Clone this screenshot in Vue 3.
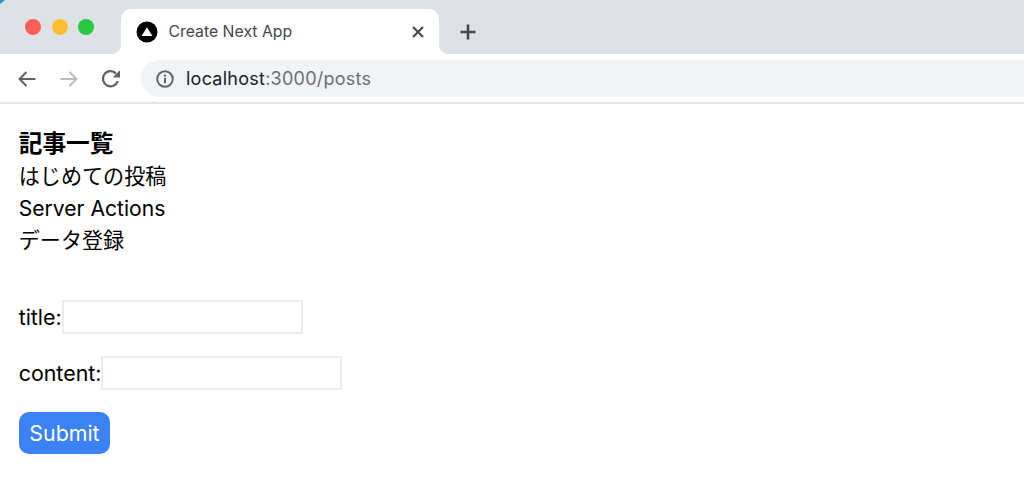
<script setup>
const posts = ['はじめての投稿', 'Server Actions', 'データ登録']
const fields = ['title', 'content']
</script>

<template>
  <div class="page">
    <span class="corner"></span>
    <header class="tabstrip">
      <div class="lights">
        <span class="light red"></span>
        <span class="light yellow"></span>
        <span class="light green"></span>
      </div>
      <div class="tab">
        <svg class="favicon" width="22" height="22" viewBox="0 0 22 22">
          <circle cx="11" cy="11" r="10.5" fill="#000" />
          <path d="M11 6.2 L16.4 15 H5.6 Z" fill="#fff" />
        </svg>
        <span class="tab-title">Create Next App</span>
        <svg class="tab-close" width="14" height="14" viewBox="0 0 14 14">
          <path d="M2 2 L12 12 M12 2 L2 12" stroke="#45484d" stroke-width="2.1" fill="none" />
        </svg>
      </div>
      <svg class="new-tab" width="18" height="18" viewBox="0 0 18 18">
        <path d="M9 1.5 V16.5 M1.5 9 H16.5" stroke="#45484d" stroke-width="2.6" fill="none" />
      </svg>
    </header>

    <nav class="toolbar">
      <svg class="nav-icon" width="20" height="20" viewBox="0 0 20 20">
        <path d="M18.5 10 H2.5 M9.5 3 L2.5 10 L9.5 17" stroke="#5f6368" stroke-width="2" fill="none" />
      </svg>
      <svg class="nav-icon" width="20" height="20" viewBox="0 0 20 20">
        <path d="M1.5 10 H17.5 M10.5 3 L17.5 10 L10.5 17" stroke="#b9bbbe" stroke-width="2" fill="none" />
      </svg>
      <svg class="nav-icon" width="20" height="20" viewBox="0 0 20 20">
        <path d="M16.8 12 A7.6 7.6 0 1 1 15 4.4" stroke="#5f6368" stroke-width="2.2" fill="none" />
        <path d="M19 1.2 V8.6 H11.6 Z" fill="#5f6368" />
      </svg>
      <div class="address">
        <svg width="18" height="18" viewBox="0 0 18 18">
          <circle cx="9" cy="9" r="7.8" stroke="#5f6368" stroke-width="1.9" fill="none" />
          <path d="M9 8 V13.2" stroke="#5f6368" stroke-width="2" />
          <circle cx="9" cy="5.6" r="1.2" fill="#5f6368" />
        </svg>
        <span class="url"><span class="host">localhost</span>:3000/posts</span>
      </div>
    </nav>

    <main class="content">
      <h1 class="heading">記事一覧</h1>
      <ul class="posts">
        <li v-for="post in posts" :key="post">{{ post }}</li>
      </ul>
      <form class="post-form" @submit.prevent>
        <label v-for="field in fields" :key="field" class="field">
          {{ field }}:<input class="input" type="text" />
        </label>
        <button class="submit" type="submit">Submit</button>
      </form>
    </main>
  </div>
</template>

<style>
html, body { margin: 0; background: #fff; }
</style>

<style scoped>
.page {
  position: relative;
  width: 1024px;
  height: 478px;
  overflow: hidden;
  background: #fff;
  color: #000;
  font-family: Inter, "Noto Sans CJK JP", sans-serif;
}
.corner {
  position: absolute;
  left: 0;
  top: 0;
  width: 5px;
  height: 4px;
  background: #1c9fc4;
  clip-path: polygon(0 0, 100% 0, 0 100%);
}
.tabstrip {
  height: 54px;
  display: flex;
  align-items: flex-end;
  background: #dee1e6;
  box-sizing: border-box;
}
.lights {
  width: 121px;
  height: 54px;
  box-sizing: border-box;
  padding: 19px 0 0 25px;
  display: flex;
  gap: 10.5px;
  align-items: flex-start;
}
.light { width: 16px; height: 16px; border-radius: 50%; }
.red { background: #ff5f57; }
.yellow { background: #febc2e; }
.green { background: #28c840; }
.tab {
  position: relative;
  width: 318px;
  height: 45px;
  box-sizing: border-box;
  padding: 0 14px 0 15px;
  display: flex;
  align-items: center;
  background: #fff;
  border-radius: 10px 10px 0 0;
}
.tab::before, .tab::after {
  content: "";
  position: absolute;
  bottom: 0;
  width: 10px;
  height: 10px;
}
.tab::before {
  left: -10px;
  background: radial-gradient(circle at 0 0, transparent 10px, #fff 10.5px);
}
.tab::after {
  right: -10px;
  background: radial-gradient(circle at 100% 0, transparent 10px, #fff 10.5px);
}
.favicon { flex: none; }
.tab-title {
  flex: 1;
  margin-left: 10.5px;
  font-size: 15.8px;
  color: #45484d;
}
.tab-close { flex: none; }
.new-tab { margin: 0 0 13px 20px; }
.toolbar {
  height: 50px;
  box-sizing: border-box;
  padding: 6px 0 5px 17px;
  display: flex;
  align-items: center;
  gap: 22px;
  background: #fff;
  border-bottom: 2px solid #e3e4e6;
}
.nav-icon { flex: none; }
.address {
  flex: 1;
  height: 37px;
  margin-left: -2px;
  margin-right: -160px;
  padding-left: 15px;
  display: flex;
  align-items: center;
  gap: 12px;
  background: #f1f3f4;
  border-radius: 18.5px;
}
.url { font-size: 18px; color: #6b6f74; letter-spacing: 0.25px; }
.host { color: #202124; }
.content {
  padding: 24px 19px 0 18.7px;
  font-size: 21.1px;
}
.heading {
  margin: 0;
  font-size: 23.7px;
  line-height: 32px;
  font-weight: 700;
}
.posts {
  margin: 1.4px 0 0;
  padding: 0;
  list-style: none;
  line-height: 32px;
}
.post-form {
  margin-top: 42.6px;
  display: flex;
  flex-direction: column;
  align-items: flex-start;
  gap: 22px;
}
.field {
  display: flex;
  align-items: center;
  font-size: 21.4px;
  line-height: 34px;
}
.input {
  width: 241px;
  height: 34px;
  box-sizing: border-box;
  margin: 0;
  padding: 0 4px;
  border: 2px solid #ebecf1;
  background: #fff;
  outline: none;
}
.submit {
  width: 91.5px;
  height: 42px;
  padding: 0;
  border: none;
  border-radius: 10px;
  background: #3b82f6;
  color: #fff;
  font-family: inherit;
  font-size: 21.33px;
}
</style>
